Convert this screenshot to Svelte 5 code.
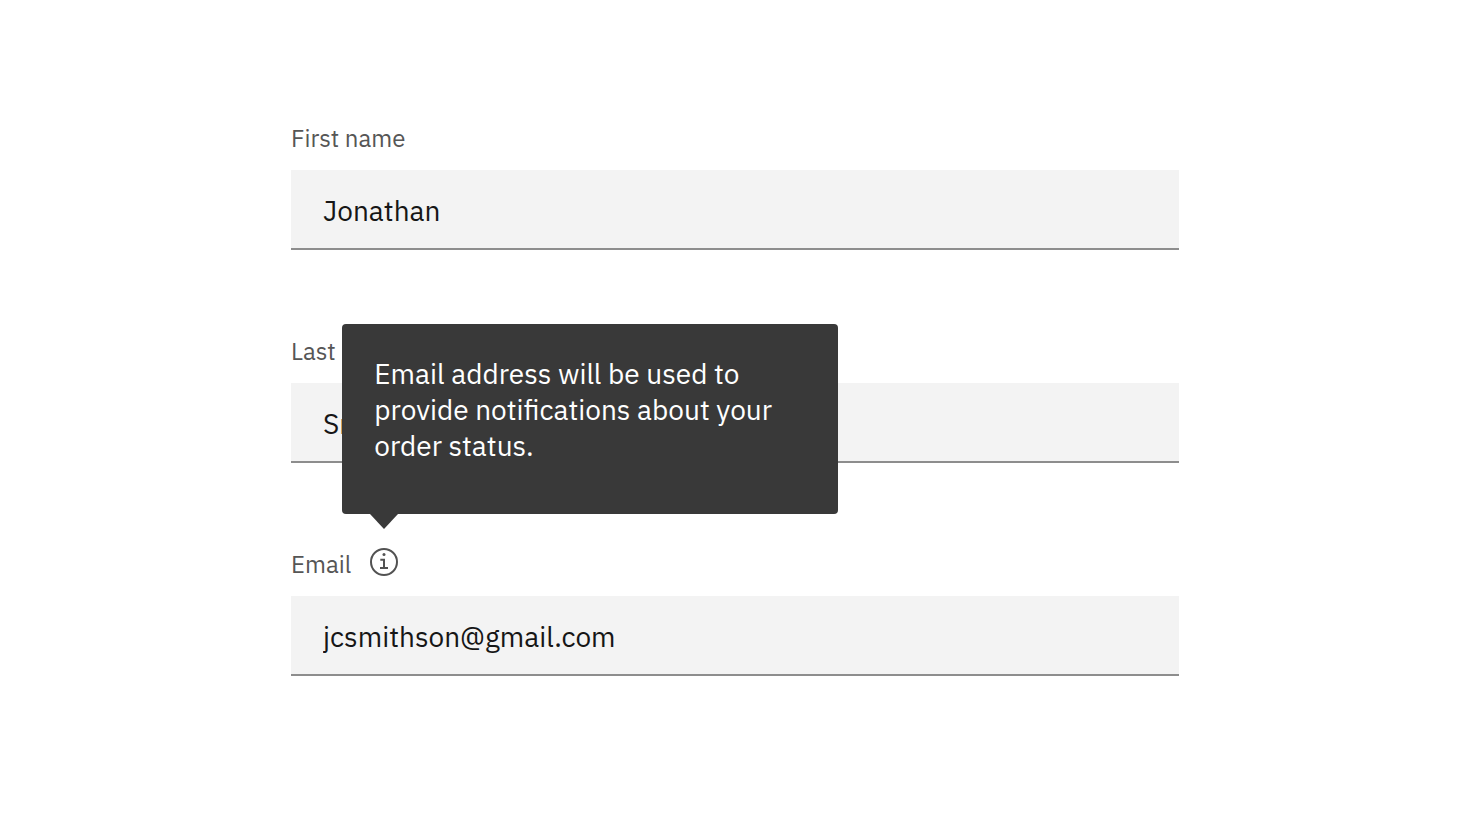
<script>
  let firstName = $state('Jonathan');
  let lastName = $state('Smithson');
  let email = $state('jcsmithson@gmail.com');
  let tooltipOpen = $state(true);
</script>

<form class="form">
  <div class="field">
    <div class="label-row">
      <label for="first-name">First name</label>
    </div>
    <input id="first-name" type="text" bind:value={firstName} />
  </div>

  <div class="field">
    <div class="label-row">
      <label for="last-name">Last name</label>
    </div>
    <input id="last-name" type="text" bind:value={lastName} />
  </div>

  <div class="field">
    <div class="label-row">
      <label for="email">Email</label>
      <div class="info">
        <button
          type="button"
          class="info-button"
          aria-label="About email"
          aria-describedby="email-tooltip"
          aria-expanded={tooltipOpen}
          onclick={() => (tooltipOpen = !tooltipOpen)}
        >
          <svg viewBox="0 0 28 28" width="28" height="28" aria-hidden="true">
            <circle cx="14" cy="14" r="13" fill="none" stroke="currentColor" stroke-width="2" />
            <circle cx="14" cy="6.6" r="1.5" fill="currentColor" />
            <path d="M10.3 11.7H14V20M10 20H18" fill="none" stroke="currentColor" stroke-width="2" />
          </svg>
        </button>
        {#if tooltipOpen}
          <div class="tooltip" id="email-tooltip" role="tooltip">
            Email address will be used to provide notifications about your order status.
          </div>
        {/if}
      </div>
    </div>
    <input id="email" type="email" bind:value={email} />
  </div>
</form>

<style>
  :global(body) {
    margin: 0;
    background: #fff;
    font-family: 'IBM Plex Sans', 'Noto Sans', sans-serif;
  }

  .form {
    display: flex;
    flex-direction: column;
    gap: 85px;
    box-sizing: border-box;
    max-width: 920px;
    margin: 0 auto;
    padding: 122px 17px 122px 15px;
  }

  .field {
    display: flex;
    flex-direction: column;
    gap: 16px;
  }

  .label-row {
    display: flex;
    align-items: flex-start;
    gap: 19px;
  }

  label {
    color: #565656;
    font-size: 24px;
    line-height: 32px;
  }

  input {
    box-sizing: border-box;
    width: 100%;
    height: 80px;
    padding: 2px 32px 0;
    border: 0;
    border-bottom: 2px solid #8d8d8d;
    border-radius: 0;
    outline: 0;
    background: #f3f3f3;
    color: #161616;
    font-family: inherit;
    font-size: 28px;
  }

  input:focus {
    outline: 2px solid #0f62fe;
    outline-offset: -2px;
  }

  .info {
    position: relative;
    height: 28px;
  }

  .info-button {
    display: block;
    padding: 0;
    border: 0;
    background: none;
    color: #525252;
    cursor: pointer;
  }

  .info-button svg {
    display: block;
  }

  .tooltip {
    position: absolute;
    bottom: 62px;
    left: -28px;
    z-index: 1;
    box-sizing: border-box;
    width: 496px;
    padding: 32px 32px 50px;
    border-radius: 4px;
    background: #393939;
    color: #fff;
    font-size: 28px;
    line-height: 36px;
  }

  .tooltip::after {
    content: '';
    position: absolute;
    top: 100%;
    left: 28px;
    border: 14px solid transparent;
    border-top: 15px solid #393939;
    border-bottom: 0;
  }
</style>
